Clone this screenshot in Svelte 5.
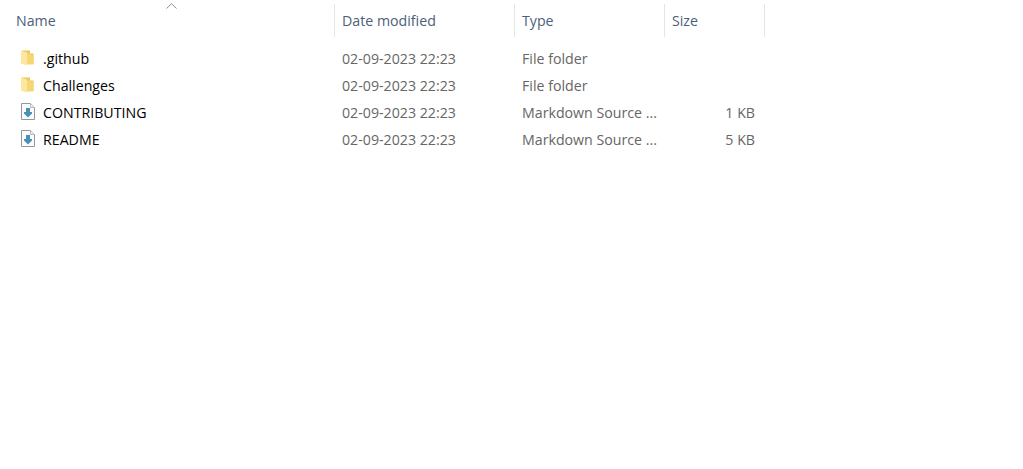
<script>
	const files = [
		{ name: '.github', icon: 'folder', type: 'File folder', size: '' },
		{ name: 'Challenges', icon: 'folder', type: 'File folder', size: '' },
		{ name: 'CONTRIBUTING', icon: 'md', type: 'Markdown Source ...', size: '1 KB' },
		{ name: 'README', icon: 'md', type: 'Markdown Source ...', size: '5 KB' }
	];
	const modified = '02-09-2023 22:23';
</script>

<div class="explorer">
	<div class="row header">
		<div class="head name-head">
			Name
			<svg class="sort" width="11" height="6" viewBox="0 0 11 6"><path d="M0.5 5.500 5.500 0.700 10.500 5.500" fill="none" stroke="#8f8f8f" /></svg>
		</div>
		<div class="head">Date modified</div>
		<div class="head">Type</div>
		<div class="head">Size</div>
	</div>

	<div class="list">
		{#each files as file}
			<div class="row item">
				<div class="name">
					{#if file.icon === 'folder'}
						<svg class="icon" width="16" height="18" viewBox="0 0 16 18">
							<path d="M2 1.500H10V4.500H13.500V15H2z" fill="#efc65c" />
							<path d="M6 4.500H10.500V6H13.500V15.500H6z" fill="#f6d775" />
							<path d="M1 1.500 7 3.500V16.500L1 14.500z" fill="#fce7a0" />
						</svg>
					{:else}
						<svg class="icon" width="16" height="18" viewBox="0 0 16 18">
							<path d="M1.500.5H10.500L14.500 4.500V16.500H1.500z" fill="#fafbfb" stroke="#8f999f" />
							<path d="M10.500 .5V4.500H14.500" fill="#eef1f2" stroke="#b5bbbf" />
							<path d="M6 5H10V9H12V10.500L8 14.500 4 10.500V9H6z" fill="#4a8fb5" />
						</svg>
					{/if}
					<span>{file.name}</span>
				</div>
				<div class="cell">{modified}</div>
				<div class="cell">{file.type}</div>
				<div class="cell size">{file.size}</div>
			</div>
		{/each}
	</div>
</div>

<style>
	:global(body) {
		background: #fff;
	}
	.explorer {
		width: 1023px;
		height: 469px;
		font-family: 'Open Sans', 'Noto Sans', sans-serif;
		font-size: 14.2px;
		overflow: hidden;
	}
	.row {
		display: grid;
		grid-template-columns: 335px 180px 150px 100px;
	}
	.header {
		height: 33px;
		padding-top: 4px;
	}
	.head {
		position: relative;
		display: flex;
		align-items: center;
		padding-left: 7px;
		color: #4c607a;
		border-right: 1px solid #e5e5e5;
	}
	.name-head {
		padding-left: 16px;
	}
	.sort {
		position: absolute;
		left: 166px;
		top: -1px;
	}
	.list {
		padding-top: 8px;
	}
	.item {
		height: 27px;
		align-items: center;
	}
	.name {
		display: flex;
		align-items: center;
		gap: 7px;
		padding-left: 20px;
		color: #000;
	}
	.icon {
		margin-top: -2px;
	}
	.cell {
		padding-left: 7px;
		color: #666;
	}
	.size {
		padding: 0 10px 0 0;
		text-align: right;
	}
</style>
